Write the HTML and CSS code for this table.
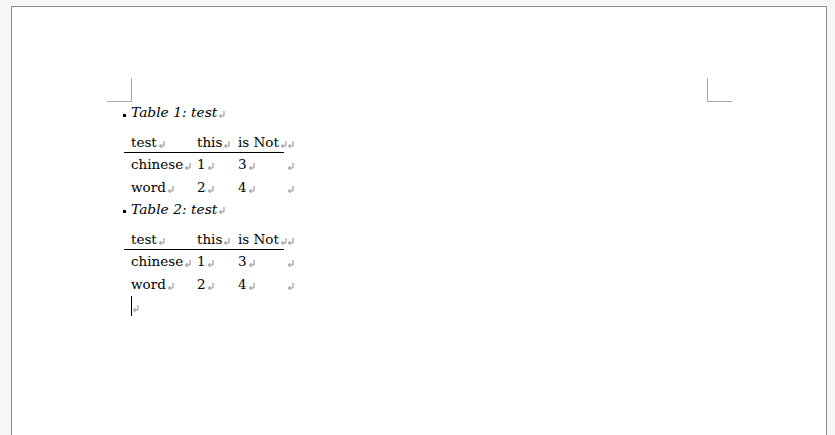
FILE: index.html
```html
<!DOCTYPE html>
<html>
<head>
<meta charset="utf-8">
<link rel="stylesheet" href="styles.css">
</head>
<body>
<div class="page">
  <div class="marks">
    <div class="mark mark-left"></div>
    <div class="mark mark-right"></div>
  </div>
  <div class="content">
    <div class="caption"><span class="bullet"></span><span class="cap-text">Table 1: test</span><svg class="pm" width="7" height="7" viewBox="0 0 7 7"><path d="M6 0V5H1.5M3.5 3L1.5 5L3.5 7" stroke="#8c8c8c" fill="none"/></svg></div>
    <table class="tbl">
      <tr class="head">
        <td class="c1">test<svg class="pm" width="7" height="7" viewBox="0 0 7 7"><path d="M6 0V5H1.5M3.5 3L1.5 5L3.5 7" stroke="#8c8c8c" fill="none"/></svg></td>
        <td class="c2">this<svg class="pm" width="7" height="7" viewBox="0 0 7 7"><path d="M6 0V5H1.5M3.5 3L1.5 5L3.5 7" stroke="#8c8c8c" fill="none"/></svg></td>
        <td class="c3">is Not<svg class="pm" width="7" height="7" viewBox="0 0 7 7"><path d="M6 0V5H1.5M3.5 3L1.5 5L3.5 7" stroke="#8c8c8c" fill="none"/></svg></td>
        <td class="end"><svg class="pm" width="7" height="7" viewBox="0 0 7 7"><path d="M6 0V5H1.5M3.5 3L1.5 5L3.5 7" stroke="#8c8c8c" fill="none"/></svg></td>
      </tr>
      <tr>
        <td class="c1">chinese<svg class="pm" width="7" height="7" viewBox="0 0 7 7"><path d="M6 0V5H1.5M3.5 3L1.5 5L3.5 7" stroke="#8c8c8c" fill="none"/></svg></td>
        <td class="c2">1<svg class="pm" width="7" height="7" viewBox="0 0 7 7"><path d="M6 0V5H1.5M3.5 3L1.5 5L3.5 7" stroke="#8c8c8c" fill="none"/></svg></td>
        <td class="c3">3<svg class="pm" width="7" height="7" viewBox="0 0 7 7"><path d="M6 0V5H1.5M3.5 3L1.5 5L3.5 7" stroke="#8c8c8c" fill="none"/></svg></td>
        <td class="end"><svg class="pm" width="7" height="7" viewBox="0 0 7 7"><path d="M6 0V5H1.5M3.5 3L1.5 5L3.5 7" stroke="#8c8c8c" fill="none"/></svg></td>
      </tr>
      <tr>
        <td class="c1">word<svg class="pm" width="7" height="7" viewBox="0 0 7 7"><path d="M6 0V5H1.5M3.5 3L1.5 5L3.5 7" stroke="#8c8c8c" fill="none"/></svg></td>
        <td class="c2">2<svg class="pm" width="7" height="7" viewBox="0 0 7 7"><path d="M6 0V5H1.5M3.5 3L1.5 5L3.5 7" stroke="#8c8c8c" fill="none"/></svg></td>
        <td class="c3">4<svg class="pm" width="7" height="7" viewBox="0 0 7 7"><path d="M6 0V5H1.5M3.5 3L1.5 5L3.5 7" stroke="#8c8c8c" fill="none"/></svg></td>
        <td class="end"><svg class="pm" width="7" height="7" viewBox="0 0 7 7"><path d="M6 0V5H1.5M3.5 3L1.5 5L3.5 7" stroke="#8c8c8c" fill="none"/></svg></td>
      </tr>
    </table>
    <div class="caption"><span class="bullet"></span><span class="cap-text">Table 2: test</span><svg class="pm" width="7" height="7" viewBox="0 0 7 7"><path d="M6 0V5H1.5M3.5 3L1.5 5L3.5 7" stroke="#8c8c8c" fill="none"/></svg></div>
    <table class="tbl">
      <tr class="head">
        <td class="c1">test<svg class="pm" width="7" height="7" viewBox="0 0 7 7"><path d="M6 0V5H1.5M3.5 3L1.5 5L3.5 7" stroke="#8c8c8c" fill="none"/></svg></td>
        <td class="c2">this<svg class="pm" width="7" height="7" viewBox="0 0 7 7"><path d="M6 0V5H1.5M3.5 3L1.5 5L3.5 7" stroke="#8c8c8c" fill="none"/></svg></td>
        <td class="c3">is Not<svg class="pm" width="7" height="7" viewBox="0 0 7 7"><path d="M6 0V5H1.5M3.5 3L1.5 5L3.5 7" stroke="#8c8c8c" fill="none"/></svg></td>
        <td class="end"><svg class="pm" width="7" height="7" viewBox="0 0 7 7"><path d="M6 0V5H1.5M3.5 3L1.5 5L3.5 7" stroke="#8c8c8c" fill="none"/></svg></td>
      </tr>
      <tr>
        <td class="c1">chinese<svg class="pm" width="7" height="7" viewBox="0 0 7 7"><path d="M6 0V5H1.5M3.5 3L1.5 5L3.5 7" stroke="#8c8c8c" fill="none"/></svg></td>
        <td class="c2">1<svg class="pm" width="7" height="7" viewBox="0 0 7 7"><path d="M6 0V5H1.5M3.5 3L1.5 5L3.5 7" stroke="#8c8c8c" fill="none"/></svg></td>
        <td class="c3">3<svg class="pm" width="7" height="7" viewBox="0 0 7 7"><path d="M6 0V5H1.5M3.5 3L1.5 5L3.5 7" stroke="#8c8c8c" fill="none"/></svg></td>
        <td class="end"><svg class="pm" width="7" height="7" viewBox="0 0 7 7"><path d="M6 0V5H1.5M3.5 3L1.5 5L3.5 7" stroke="#8c8c8c" fill="none"/></svg></td>
      </tr>
      <tr>
        <td class="c1">word<svg class="pm" width="7" height="7" viewBox="0 0 7 7"><path d="M6 0V5H1.5M3.5 3L1.5 5L3.5 7" stroke="#8c8c8c" fill="none"/></svg></td>
        <td class="c2">2<svg class="pm" width="7" height="7" viewBox="0 0 7 7"><path d="M6 0V5H1.5M3.5 3L1.5 5L3.5 7" stroke="#8c8c8c" fill="none"/></svg></td>
        <td class="c3">4<svg class="pm" width="7" height="7" viewBox="0 0 7 7"><path d="M6 0V5H1.5M3.5 3L1.5 5L3.5 7" stroke="#8c8c8c" fill="none"/></svg></td>
        <td class="end"><svg class="pm" width="7" height="7" viewBox="0 0 7 7"><path d="M6 0V5H1.5M3.5 3L1.5 5L3.5 7" stroke="#8c8c8c" fill="none"/></svg></td>
      </tr>
    </table>
    <div class="cursor-line"><span class="cursor"></span><svg class="pm" width="7" height="7" viewBox="0 0 7 7"><path d="M6 0V5H1.5M3.5 3L1.5 5L3.5 7" stroke="#8c8c8c" fill="none"/></svg></div>
  </div>
</div>
</body>
</html>
```
FILE: styles.css
```css
html, body {
  margin: 0;
  padding: 0;
  background: #f6f6f6;
  overflow: hidden;
  height: 435px;
}
body {
  font-family: "DejaVu Serif", serif;
  font-size: 13.5px;
  color: #000;
}
.page {
  margin: 6px 0 0 11px;
  width: 814px;
  height: 440px;
  background: #fff;
  border: 1px solid #8a8a8a;
  border-bottom: none;
}
.marks {
  display: flex;
  justify-content: space-between;
  padding: 71px 94px 0 95px;
}
.mark {
  width: 24px;
  height: 23px;
  border-bottom: 1px solid #a6a6a6;
}
.mark-left {
  border-right: 1px solid #a6a6a6;
}
.mark-right {
  border-left: 1px solid #a6a6a6;
}
.content {
  padding-left: 111px;
}
.caption {
  display: flex;
  align-items: center;
  height: 20px;
  line-height: 20px;
}
.bullet {
  width: 3px;
  height: 3px;
  background: #000;
  margin-top: 6px;
  margin-right: 5px;
}
.cap-text {
  font-style: italic;
  font-size: 13.8px;
}
.caption .pm {
  margin-top: 4px;
}
.pm {
  display: inline-block;
  vertical-align: -1px;
  margin-left: 1px;
}
.tbl {
  border-collapse: collapse;
  table-layout: fixed;
  width: 174px;
  margin: 10px 0 0 1px;
}
.tbl td {
  box-sizing: border-box;
  padding: 0 0 0 7px;
  height: 23px;
  line-height: 20px;
  white-space: nowrap;
  overflow: visible;
}
.tbl .head td {
  height: 20px;
  border-bottom: 1px solid #000;
}
.tbl .head td.end {
  border-bottom: none;
}
.tbl td.c1 { width: 66px; }
.tbl td.c2 { width: 41px; }
.tbl td.c3 { width: 53px; }
.tbl td.end { width: 14px; padding-left: 2px; }
.cursor-line {
  display: flex;
  align-items: center;
  height: 22px;
  padding-left: 8px;
}
.cursor {
  width: 1px;
  height: 20px;
  background: #000;
}
.cursor-line .pm {
  margin-left: 0;
  margin-top: 4px;
}
```
